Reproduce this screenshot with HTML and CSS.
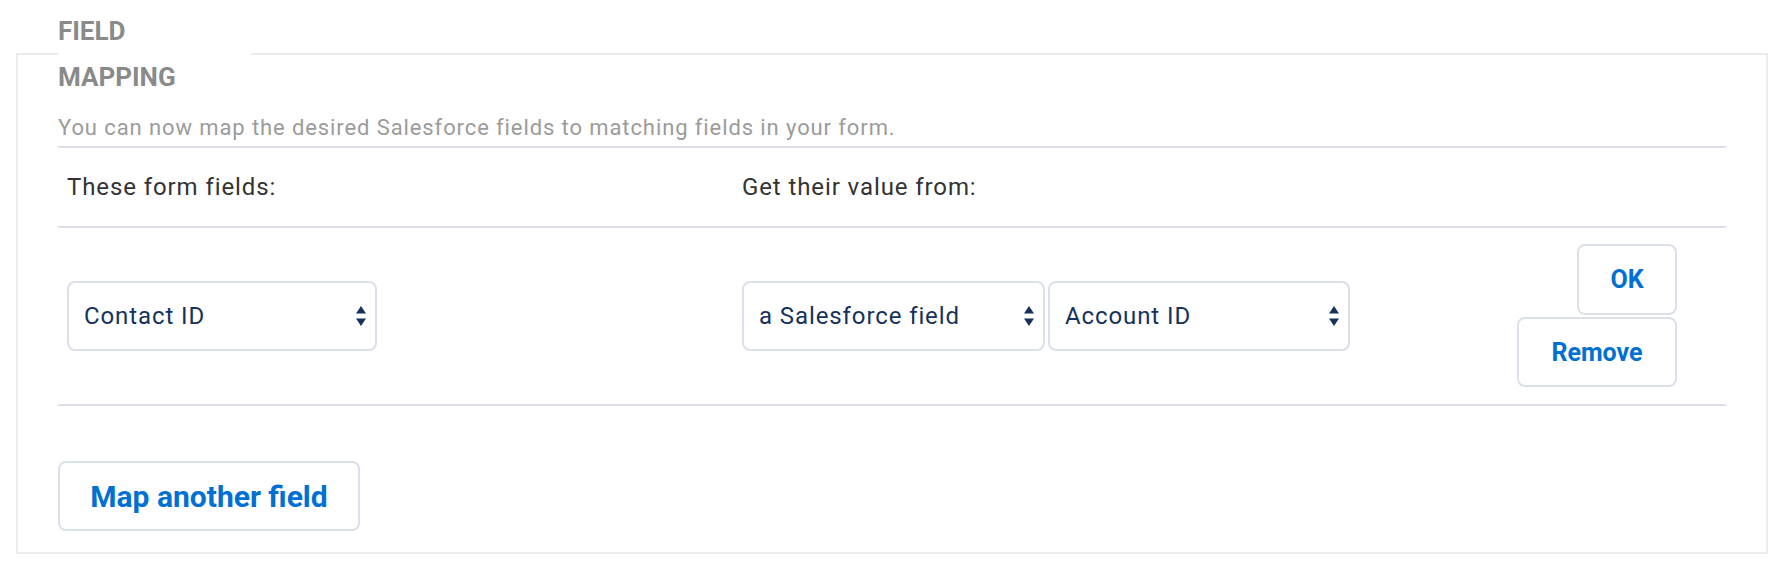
FILE: index.html
```html
<!DOCTYPE html>
<html lang="en">
<head>
<meta charset="utf-8">
<title>Field Mapping</title>
<link rel="stylesheet" href="styles.css">
</head>
<body>
<fieldset class="panel">
  <legend class="panel-title">FIELD MAPPING</legend>
  <p class="intro">You can now map the desired Salesforce fields to matching fields in your form.</p>
  <div class="map-table">
    <div class="map-row map-head">
      <div class="cell cell-target">These form fields:</div>
      <div class="cell cell-source">Get their value from:</div>
      <div class="cell cell-actions"></div>
    </div>
    <div class="map-row map-item">
      <div class="cell cell-target">
        <div class="select select-contact">
          <span>Contact ID</span>
          <svg class="caret" width="10" height="22" viewBox="0 0 10 22"><polygon points="0,8.5 5,1 10,8.5"/><polygon points="0,13.5 10,13.5 5,21"/></svg>
        </div>
      </div>
      <div class="cell cell-source">
        <div class="select select-type">
          <span>a Salesforce field</span>
          <svg class="caret" width="10" height="22" viewBox="0 0 10 22"><polygon points="0,8.5 5,1 10,8.5"/><polygon points="0,13.5 10,13.5 5,21"/></svg>
        </div>
        <div class="select select-field">
          <span>Account ID</span>
          <svg class="caret" width="10" height="22" viewBox="0 0 10 22"><polygon points="0,8.5 5,1 10,8.5"/><polygon points="0,13.5 10,13.5 5,21"/></svg>
        </div>
      </div>
      <div class="cell cell-actions">
        <button class="btn btn-ok">OK</button>
        <button class="btn btn-remove">Remove</button>
      </div>
    </div>
  </div>
  <button class="btn btn-add">Map another field</button>
</fieldset>
</body>
</html>
```
FILE: styles.css
```css
body {
  margin: 0;
  background: #ffffff;
  font-family: Roboto, "Noto Sans", Arial, sans-serif;
}

.panel {
  margin: 8px 14px 0 16px;
  padding: 0 40px 21px;
  border: 2px solid #ebebeb;
  min-width: 0;
}

.panel-title {
  box-sizing: border-box;
  width: 193px;
  padding: 0 40px 0 0;
  font-size: 26px;
  line-height: 46px;
  font-weight: 700;
  color: #8a8a8a;
}

.intro {
  margin: 16px 0 0;
  padding-bottom: 6px;
  border-bottom: 2px solid #dde0ea;
  font-size: 22px;
  line-height: 24px;
  letter-spacing: 0.9px;
  color: #9b9b9b;
}

.map-row {
  display: grid;
  grid-template-columns: 675px 1fr auto;
  border-bottom: 2px solid #dde0ea;
  align-items: center;
}

.map-head {
  height: 78px;
  font-size: 24px;
  letter-spacing: 0.9px;
  color: #333333;
}

.cell {
  padding: 0 9px;
}

.cell-source {
  display: flex;
  gap: 3px;
}

.cell-actions {
  padding: 0 49px 0 9px;
}

.map-item .cell-actions {
  display: flex;
  flex-direction: column;
  align-items: flex-end;
  gap: 2px;
  padding-top: 16px;
  padding-bottom: 17px;
}

.select {
  box-sizing: border-box;
  display: flex;
  align-items: center;
  justify-content: space-between;
  height: 70px;
  padding: 0 9px 0 15px;
  border: 2px solid #dce0ea;
  border-radius: 8px;
  background: #ffffff;
  font-size: 24px;
  letter-spacing: 0.9px;
  color: #16325c;
}

.select-contact { width: 310px; }
.select-type { width: 303px; }
.select-field { width: 302px; }

.caret {
  fill: #16325c;
  flex: none;
}

.btn {
  box-sizing: border-box;
  padding: 0;
  border: 2px solid #dce0ea;
  border-radius: 8px;
  background: #ffffff;
  color: #0070d2;
  font-family: Roboto, "Noto Sans", Arial, sans-serif;
  font-weight: 700;
  cursor: pointer;
}

.btn-ok {
  width: 100px;
  height: 71px;
  font-size: 25px;
}

.btn-remove {
  width: 160px;
  height: 70px;
  font-size: 25px;
}

.btn-add {
  display: block;
  width: 302px;
  height: 70px;
  margin-top: 55px;
  font-size: 30px;
}
```
